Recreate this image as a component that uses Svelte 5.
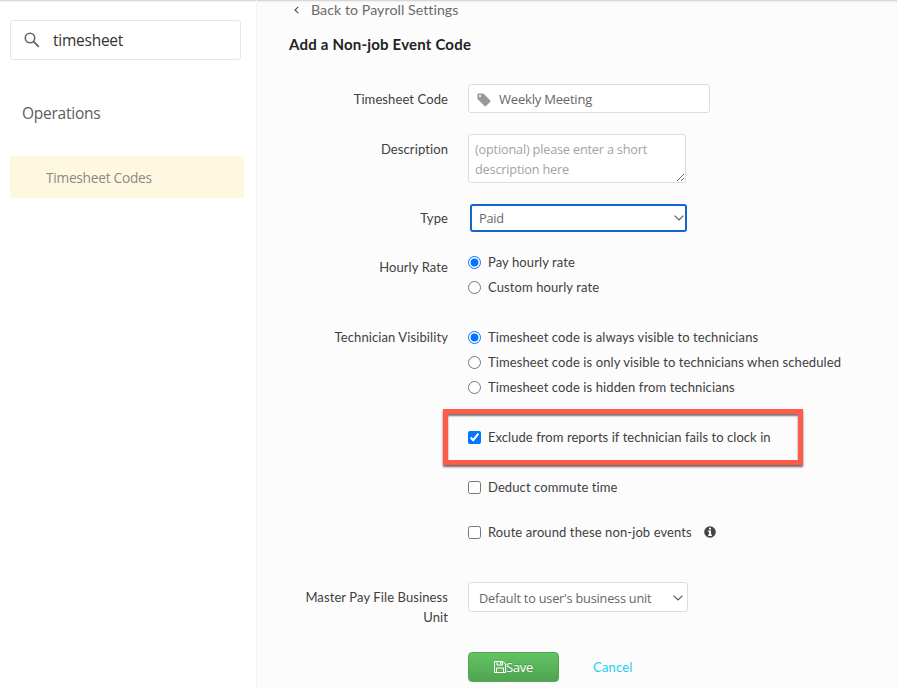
<script lang="ts">
  let search = $state('timesheet');
  let name = $state('Weekly Meeting');
  let description = $state('');
  let type = $state('Paid');
  let rate = $state('hourly');
  let visibility = $state('always');
  let exclude = $state(true);
  let deduct = $state(false);
  let route = $state(false);
  let unit = $state('default');

  const rates = [
    { value: 'hourly', label: 'Pay hourly rate' },
    { value: 'custom', label: 'Custom hourly rate' }
  ];

  const visibilities = [
    { value: 'always', label: 'Timesheet code is always visible to technicians' },
    { value: 'scheduled', label: 'Timesheet code is only visible to technicians when scheduled' },
    { value: 'hidden', label: 'Timesheet code is hidden from technicians' }
  ];
</script>

{#snippet chevron()}
  <svg class="chevron" viewBox="0 0 10 6" width="10" height="6">
    <path d="M0.6 0.6 L5 5 L9.4 0.6" fill="none" stroke="#5c5c5c" stroke-width="1.2" />
  </svg>
{/snippet}

<div class="page">
  <aside>
    <div class="search">
      <svg viewBox="0 0 16 16" width="16" height="16">
        <circle cx="6" cy="6" r="4.7" fill="none" stroke="#666" stroke-width="1.6" />
        <path d="M9.4 9.4 L14.8 14.8" stroke="#666" stroke-width="1.9" />
      </svg>
      <input type="text" aria-label="Search" bind:value={search} />
    </div>
    <h2>Operations</h2>
    <nav><a href="#codes">Timesheet Codes</a></nav>
  </aside>

  <main>
    <a class="back" href="#payroll">
      <svg viewBox="0 0 5 8" width="5" height="8">
        <path d="M4.2 0.8 L1 4 L4.2 7.2" fill="none" stroke="#555" stroke-width="1.2" />
      </svg>
      <span>Back to Payroll Settings</span>
    </a>
    <h1><span>Add a Non-job Event Code</span></h1>

    <form onsubmit={(e) => e.preventDefault()}>
      <div class="row code">
        <label class="name" for="code">Timesheet Code</label>
        <div class="field">
          <svg viewBox="0 0 14 14" width="14" height="14">
            <path
              fill="#999"
              fill-rule="evenodd"
              d="M0.4 1.6 Q0.4 0.5 1.5 0.5 L5.8 0.6 Q6.6 0.7 7.2 1.3 L13.3 7.4 Q13.9 8 13.3 8.7 L9 13.1 Q8.3 13.8 7.6 13.1 L1.2 6.8 Q0.6 6.2 0.5 5.4 Z M3.1 1.9 A1.1 1.1 0 1 0 3.1 4.1 A1.1 1.1 0 1 0 3.1 1.9 Z"
            />
          </svg>
          <input id="code" type="text" bind:value={name} />
        </div>
      </div>

      <div class="row description">
        <label class="name" for="description">Description</label>
        <textarea
          id="description"
          placeholder="(optional) please enter a short description here"
          bind:value={description}
        ></textarea>
      </div>

      <div class="row type">
        <label class="name" for="type">Type</label>
        <div class="select focused">
          <select id="type" bind:value={type}>
            <option>Paid</option>
            <option>Unpaid</option>
          </select>
          {@render chevron()}
        </div>
      </div>

      <div class="row rate">
        <span class="name">Hourly Rate</span>
        <div class="options">
          {#each rates as item}
            <label class="option">
              <input type="radio" name="rate" value={item.value} bind:group={rate} />
              <span>{item.label}</span>
            </label>
          {/each}
        </div>
      </div>

      <div class="row visibility">
        <span class="name">Technician Visibility</span>
        <div class="options">
          {#each visibilities as item}
            <label class="option">
              <input type="radio" name="visibility" value={item.value} bind:group={visibility} />
              <span>{item.label}</span>
            </label>
          {/each}
        </div>
      </div>

      <div class="checks">
        <label class="option highlighted">
          <input type="checkbox" bind:checked={exclude} />
          <span>Exclude from reports if technician fails to clock in</span>
        </label>
        <label class="option deduct">
          <input type="checkbox" bind:checked={deduct} />
          <span>Deduct commute time</span>
        </label>
        <label class="option route">
          <input type="checkbox" bind:checked={route} />
          <span>Route around these non-job events</span>
          <svg class="info" viewBox="0 0 12 12" width="12" height="12">
            <circle cx="6" cy="6" r="5.8" fill="#444" />
            <path d="M5 1.8 H7 V3.5 H5 Z M4.2 4.6 H7 V8.6 H7.9 V10 H4.2 V8.6 H5 V6 H4.2 Z" fill="#fff" />
          </svg>
        </label>
      </div>

      <div class="row unit">
        <label class="name" for="unit">Master Pay File Business Unit</label>
        <div class="select">
          <select id="unit" bind:value={unit}>
            <option value="default">Default to user's business unit</option>
          </select>
          {@render chevron()}
        </div>
      </div>

      <div class="actions">
        <button type="submit">
          <svg viewBox="0 0 12 12" width="12" height="12" fill="none" stroke="#fff">
            <path d="M0.5 0.5 H9 L11.5 3 V11.5 H0.5 Z" />
            <path d="M3 0.5 V4 H8.5 V0.5 M2.5 11.5 V7 H9.5 V11.5" />
            <path d="M6.8 1 V3.2" stroke-width="1.4" />
          </svg>
          <span>Save</span>
        </button>
        <a href="#cancel">Cancel</a>
      </div>
    </form>
  </main>
</div>

<style>
  :global(body) {
    margin: 0;
  }

  .page {
    display: flex;
    box-sizing: border-box;
    height: 688px;
    overflow: hidden;
    background: #fcfcfc;
    box-shadow: inset 0 2px 2px -1px #ccc;
    font: 13px/20px Lato, sans-serif;
    letter-spacing: 0.1px;
    color: #404040;
  }

  input,
  select,
  textarea,
  button {
    font: inherit;
    letter-spacing: inherit;
    color: inherit;
  }

  a {
    color: inherit;
    text-decoration: none;
  }

  aside {
    box-sizing: border-box;
    flex: none;
    width: 257px;
    padding: 20px 12px 0 10px;
    background: #fff;
    border-right: 1px solid #f4f4f4;
    box-shadow: inset 0 2px 2px -1px #ccc;
    font-family: "Open Sans", sans-serif;
    letter-spacing: -0.25px;
  }

  .search {
    display: flex;
    align-items: center;
    box-sizing: border-box;
    width: 231px;
    height: 40px;
    padding-left: 13px;
    border: 1px solid #e6e6e6;
    border-radius: 3px;
  }

  .search input {
    width: 150px;
    margin-left: 13px;
    padding: 0;
    border: 0;
    outline: 0;
    background: none;
    font-size: 15.5px;
    color: #333;
  }

  h2 {
    margin: 43px 0 0 12px;
    font-size: 15.5px;
    line-height: 20px;
    font-weight: 400;
    color: #5c5c5c;
  }

  nav a {
    display: block;
    width: 198px;
    margin-top: 33px;
    padding: 12px 0 10px 36px;
    background: #fff8e1;
    font-size: 13.7px;
    color: #8a8a85;
  }

  main {
    flex: 1;
    padding-left: 32px;
  }

  .back {
    display: flex;
    align-items: center;
    height: 20px;
    padding-left: 5px;
    font-size: 14.2px;
    letter-spacing: 0.05px;
    color: #6a6a6a;
  }

  .back span {
    margin-left: 12px;
  }

  h1 {
    margin: 14px 0 30px;
    font-size: 15px;
    line-height: 20px;
    font-weight: 700;
    letter-spacing: 0.2px;
    color: #222;
  }

  .row {
    display: flex;
    align-items: flex-start;
  }

  .name {
    flex: none;
    box-sizing: border-box;
    width: 159px;
    margin-right: 20px;
    padding: 5px 0 0 10px;
    text-align: right;
  }

  .field {
    display: flex;
    align-items: center;
    box-sizing: border-box;
    width: 242px;
    height: 29px;
    padding-left: 8px;
    background: #fff;
    border: 1px solid #dcdcdc;
    border-radius: 3px;
    font-family: "Open Sans", sans-serif;
    letter-spacing: -0.2px;
    color: #666;
  }

  .field svg {
    margin-top: 2px;
  }

  .field input {
    width: 190px;
    margin-left: 8px;
    padding: 0;
    border: 0;
    outline: 0;
    background: none;
  }

  .description {
    margin-top: 21px;
  }

  textarea {
    box-sizing: border-box;
    width: 218px;
    height: 49px;
    margin: 0;
    padding: 4px 6px;
    background: #fff;
    border: 1px solid #dcdcdc;
    border-radius: 3px;
    overflow: hidden;
    font-family: "Open Sans", sans-serif;
    font-size: 12.7px;
    letter-spacing: -0.18px;
  }

  textarea::placeholder {
    color: #a3a3a3;
  }

  .type {
    margin-top: 20px;
  }

  .type .name {
    padding-top: 5px;
  }

  .select {
    display: flex;
    align-items: center;
    box-sizing: border-box;
    width: 220px;
    height: 30px;
    padding: 1px 4px 0 0;
    background: #fff;
    border: 1px solid #dcdcdc;
    border-radius: 3px;
    font-family: "Open Sans", sans-serif;
    font-size: 12.7px;
    letter-spacing: -0.2px;
    color: #666;
  }

  .select.focused {
    width: 217px;
    height: 28px;
    margin: 1px 0 -1px 2px;
    padding: 0 1px 0 0;
    border: 2px solid #1565d0;
  }

  select {
    appearance: none;
    flex: 1;
    min-width: 0;
    padding: 0 0 0 10px;
    border: 0;
    outline: 0;
    background: none;
  }

  .focused select {
    padding-left: 7px;
  }

  .chevron {
    flex: none;
    pointer-events: none;
  }

  .rate {
    margin-top: 21px;
  }

  .visibility {
    margin-top: 30px;
  }

  .visibility .name {
    padding-top: 0;
  }

  .options {
    display: flex;
    flex-direction: column;
    gap: 5px;
  }

  .option {
    display: flex;
    align-items: center;
    height: 20px;
  }

  .option input {
    width: 13px;
    height: 13px;
    margin: 0 7px 0 0;
  }

  .checks {
    margin: 30px 0 0 179px;
  }

  .highlighted {
    position: relative;
    letter-spacing: 0.06px;
  }

  /* callout frame around the option */
  .highlighted::after {
    content: '';
    position: absolute;
    box-sizing: border-box;
    left: -25px;
    top: -18px;
    width: 360px;
    height: 56px;
    border: 5px solid #ff5a4a;
    box-shadow: 0 2px 2px #666, inset 0 2px 2px #777;
    pointer-events: none;
  }

  .deduct {
    margin-top: 30px;
  }

  .route {
    margin-top: 25px;
  }

  .info {
    margin-left: 12px;
  }

  .unit {
    margin-top: 40px;
  }

  .actions {
    display: flex;
    align-items: center;
    margin: 25px 0 0 179px;
  }

  button {
    display: flex;
    align-items: center;
    justify-content: center;
    width: 91px;
    height: 30px;
    padding: 0;
    border: 1px solid #53a653;
    border-radius: 4px;
    background: linear-gradient(#62c462, #51a351);
    font-family: "Open Sans", sans-serif;
    letter-spacing: -0.3px;
    color: #fff;
    text-shadow: 0 -1px 0 rgba(0, 0, 0, 0.2);
  }

  .actions a {
    margin-left: 34px;
    letter-spacing: 0.2px;
    color: #1ccfee;
  }
</style>
